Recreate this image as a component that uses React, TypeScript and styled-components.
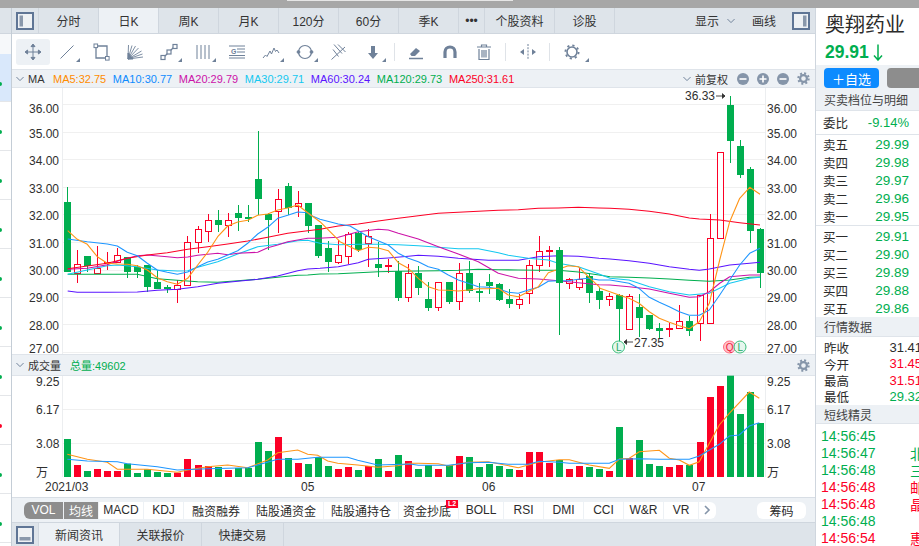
import React from "react";
import styled, { createGlobalStyle } from "styled-components";

const RED = "#fc0026";
const GREEN = "#00ae4f";
const ICON = "#6f8199";
const BAR = "#edf1f5";
const TAB = "#dee4ea";
const LINE = "#cfd6de";

const Global = createGlobalStyle`
  html, body { margin: 0; padding: 0; background: #fff; overflow: hidden; }
  body { font-family: "Liberation Sans", "Noto Sans CJK SC", sans-serif; color: #2b2b2b; }
  * { box-sizing: border-box; }
`;

const Page = styled.div`
  width: 919px; height: 546px; display: flex; flex-direction: column; overflow: hidden;
`;
const TitleBar = styled.div`
  height: 8px; flex: none; background: #a7a7a7; padding-left: 287px;
`;
const TitleSliver = styled.div`
  width: 226px; height: 1px; background: #e6e6e6;
`;
const Body = styled.div`
  flex: 1; display: flex; min-height: 0;
`;
const LeftStrip = styled.div`
  width: 12px; flex: none; display: flex; flex-direction: column; overflow: hidden;
  border-right: 1px solid #c4cdd6;
`;
const StripHead = styled.div`
  height: 26px; flex: none; background: ${TAB}; border-bottom: 1px solid ${LINE};
`;
const StripSub = styled.div`
  height: 20px; flex: none; background: #f6f8fa;
`;
const StripRow = styled.div<{ $active?: boolean; $h: number }>`
  position: relative; flex: none; height: ${p => p.$h}px;
  background: ${p => (p.$active ? "#d9e8fb" : "#fff")};
  border-bottom: 1px solid #e4e6e9;
`;
const StripDot = styled.span<{ $c: string }>`
  position: absolute; left: -2px; top: 28px; width: 4px; height: 4px; border-radius: 50%;
  background: ${p => p.$c};
`;
const Main = styled.div`
  width: 804px; flex: none; display: flex; flex-direction: column; border-right: 1px solid ${LINE};
`;
const TabRow = styled.div`
  height: 26px; flex: none; display: flex; align-items: stretch; background: ${TAB};
  border-bottom: 1px solid ${LINE}; font-size: 12px; color: #333;
`;
const Tab = styled.div<{ $w: number; $active?: boolean }>`
  width: ${p => p.$w}px; flex: none; display: flex; align-items: center; justify-content: center;
  border-right: 1px solid ${LINE}; background: ${p => (p.$active ? BAR : "transparent")};
`;
const RightTabs = styled.div`
  margin-left: auto; display: flex; align-items: center; padding-right: 5px;
`;
const PlainLabel = styled.span<{ $w: number }>`
  width: ${p => p.$w}px; display: flex; align-items: center; gap: 8px;
`;
const Toolbar = styled.div`
  height: 35px; flex: none; display: flex; align-items: center; padding-left: 4px; background: #fff;
`;
const Tool = styled.div<{ $active?: boolean; $w?: number }>`
  position: relative; width: ${p => p.$w ?? 34}px; height: 26px; flex: none;
  display: flex; align-items: center; justify-content: center; border-radius: 3px;
  background: ${p => (p.$active ? BAR : "transparent")};
`;
const Corner = styled.span`
  position: absolute; right: 4px; bottom: 3px; width: 0; height: 0;
  border-style: solid; border-width: 0 0 4px 4px; border-color: transparent transparent ${ICON} transparent;
`;
const ToolSep = styled.div`
  width: 1px; height: 18px; flex: none; background: #dfe3e8;
`;
const InfoBar = styled.div<{ $h: number }>`
  height: ${p => p.$h}px; flex: none; display: flex; align-items: center; gap: 6.67px;
  background: ${BAR}; border-top: 1px solid #dfe4ea; border-bottom: 1px solid #dfe4ea;
  padding-left: 4px; padding-right: 5px; font-size: 11px;
`;
const BarTitle = styled.span<{ $w: number }>`
  width: ${p => p.$w}px; margin-left: -2.67px; font-size: 11px; color: #333; flex: none; white-space: nowrap;
`;
const Legend = styled.span<{ $c: string }>`
  color: ${p => p.$c}; flex: none; font-size: 11px; white-space: nowrap;
`;
const BarTools = styled.div`
  margin-left: auto; display: flex; align-items: center; gap: 8px; color: #333;
`;
const BarLabel = styled.span`
  display: flex; align-items: center; gap: 4px; margin-right: 1px;
`;
const Canvas = styled.svg`
  display: block; flex: none; background: #fff; overflow: visible;
`;
const AxisText = styled.text`
  font-size: 12px; fill: #2f2f2f; font-family: "Liberation Sans", "Noto Sans CJK SC", sans-serif;
`;
const MarkText = styled.text<{ $c: string }>`
  font-size: 10px; fill: ${p => p.$c}; font-family: "Liberation Sans", sans-serif;
`;
const IndicatorBar = styled.div`
  height: 25px; flex: none; display: flex; align-items: center; gap: 1px;
  background: ${BAR}; border-top: 1px solid #d8dee5; padding: 0 9px 0 12px; font-size: 12px;
`;
const Chip = styled.div<{ $w: number; $on?: boolean; $radius?: string }>`
  position: relative; width: ${p => p.$w}px; height: 17px; flex: none;
  display: flex; align-items: center; justify-content: center;
  background: ${p => (p.$on ? "#8d8d8d" : "#fff")}; color: ${p => (p.$on ? "#fff" : "#2b2b2b")};
  border-radius: ${p => p.$radius ?? "0"};
`;
const ChipEnd = styled(Chip)`
  margin-left: auto;
`;
const ChipBadge = styled.span`
  position: absolute; right: 0; top: -2px; width: 12px; height: 8px; background: ${RED}; color: #fff;
  font-size: 7px; font-weight: 700; line-height: 8px; text-align: center;
`;
const ChipLabel = styled.span`
  font-size: 12px; white-space: nowrap; margin-left: -3px;
`;
const BottomTabs = styled.div`
  flex: 1; display: flex; align-items: stretch; background: ${TAB}; border-top: 1px solid ${LINE};
  font-size: 12px; color: #333;
`;
const Side = styled.div`
  flex: 1; min-width: 0; display: flex; flex-direction: column; overflow: hidden; background: #fff;
`;
const Name = styled.div`
  font-size: 20px; line-height: 24px; padding: 5px 0 0 9px; color: #2b2b2b; white-space: nowrap;
  height: 32px; flex: none;
`;
const Price = styled.div`
  height: 25px; flex: none; display: flex; align-items: center; gap: 4px; padding-left: 9px;
  font-size: 17.5px; font-weight: 700; color: ${GREEN};
`;
const ActionBar = styled.div`
  height: 23px; flex: none; display: flex; gap: 8px; padding: 3px 0 0 8px; background: ${BAR};
`;
const PrimaryBtn = styled.div`
  width: 55px; height: 20px; flex: none; border-radius: 4px; background: #0d8bff; color: #fff;
  font-size: 13px; display: flex; align-items: center; justify-content: center;
`;
const GrayBtn = styled.div`
  width: 50px; height: 20px; flex: none; border-radius: 4px; background: #8d8d8d;
`;
const SectionHead = styled.div<{ $h: number }>`
  height: ${p => p.$h}px; flex: none; display: flex; align-items: center; padding-left: 8px;
  background: ${BAR}; border-bottom: 1px solid #dfe4ea; font-size: 12px; color: #444;
`;
const Group = styled.div<{ $line?: boolean; $pad?: string }>`
  flex: none; padding: ${p => p.$pad ?? "0"}; border-bottom: ${p => (p.$line ? "1px solid #dfe4ea" : "none")};
`;
const QuoteRow = styled.div<{ $h: number }>`
  height: ${p => p.$h}px; display: flex; align-items: center; justify-content: space-between;
  padding: 0 10px 0 7px; font-size: 12.5px; white-space: nowrap;
`;
const StatRow = styled(QuoteRow)`
  padding: 0 0 0 8px; margin-right: -3px;
`;
const Val = styled.span<{ $c: string; $size?: number }>`
  color: ${p => p.$c}; font-size: ${p => p.$size ?? 13.5}px;
`;
const FlowRow = styled.div<{ $c: string }>`
  height: 17px; flex: none; display: flex; justify-content: space-between; align-items: center;
  padding-left: 5px; color: ${p => p.$c}; font-size: 14px; white-space: nowrap; width: 108px;
`;

type C = [number, number, number, number, number];
// [top wick, body top, body bottom, low wick, red?]  measured in 3x units from y=90
const candles: C[] = [
  [292,336,546,546,0],[480,523,548,578,1],[497,497,527,545,0],[468,535,548,548,1],[487,515,522,540,1],
  [475,496,515,520,1],[500,502,546,563,0],[525,530,546,563,0],[525,525,590,605,0],[540,576,597,597,0],
  [585,591,598,610,0],[570,586,597,640,1],[437,455,584,587,1],[408,418,455,488,1],[373,391,422,455,1],
  [360,390,405,425,0],[370,391,404,440,1],[345,369,384,422,0],[345,381,384,395,0],[124,267,326,375,0],
  [370,373,390,480,0],[297,328,364,430,1],[280,288,353,375,0],[303,340,347,382,1],[340,340,408,428,0],
  [405,405,498,505,0],[452,474,516,545,0],[450,496,515,522,1],[425,431,497,522,1],[425,429,480,485,0],
  [418,438,458,532,1],[455,522,534,562,0],[508,525,530,548,1],[512,544,623,632,0],[522,550,622,635,1],
  [528,549,593,615,0],[575,627,653,662,0],[575,577,652,663,1],[575,576,635,642,0],[520,550,634,660,1],
  [512,549,604,608,0],[580,603,607,635,0],[553,576,587,612,0],[578,582,630,632,0],[598,627,641,655,0],
  [612,628,643,656,1],[510,526,610,643,1],[438,482,526,545,1],[468,481,485,530,1],[472,480,578,736,0],
  [565,566,580,596,1],[535,566,592,600,1],[550,558,608,640,0],[590,604,630,656,0],[608,617,628,647,1],
  [612,616,656,760,0],[612,617,718,718,1],[612,652,684,740,0],[675,676,717,720,0],[698,714,722,745,0],
  [700,715,721,740,1],[645,694,715,717,1],[678,693,724,737,0],[615,615,700,752,1],[372,445,700,700,1],
  [187,187,445,445,1],[17,45,152,220,0],[150,168,255,263,0],[232,237,422,460,0],[415,418,548,595,0],
];

type Seg = [number, number[]];
const pts = (base: number, segs: Seg[]) => {
  const out: string[] = [];
  let last = -1;
  segs.forEach(([off, a]) => {
    for (let i = 0; i < a.length; i += 2) {
      const x = off + a[i] / 3;
      if (x > last) {
        out.push(`${x.toFixed(1)},${(base + a[i + 1] / 3).toFixed(1)}`);
        last = x;
      }
    }
  });
  return out.join(" ");
};

const maLines: { c: string; s: Seg[] }[] = [
  { c: "#00ae4f", s: [[0,[203,553,322,553,412,553,472,566,532,571,593,575,653,577,713,572,773,568,833,562,893,556,923,555]],[300,[60,552,115,551,175,548,235,545,295,544,355,543,415,542,475,541,535,538,595,539,655,540,715,541,775,541,835,546,897,555]],[590,[60,560,117,562,178,564,238,567,298,571,358,574,419,570,479,562,510,561]]] },
  { c: "#5a14ff", s: [[0,[203,603,232,607,322,607,412,606,472,601,532,598,593,590,653,580,713,574,773,568,833,558,893,542,923,537]],[300,[60,535,115,530,175,518,205,508,265,504,325,499,355,496,415,499,475,505,565,511,655,511,715,500,775,497,835,499,897,505]],[590,[60,507,117,512,178,520,238,530,298,538,328,541,358,537,419,525,479,520,510,517]]] },
  { c: "#14c8f0", s: [[0,[203,553,262,540,322,527,352,525,412,530,472,540,532,543,563,542,593,532,653,515,713,492,773,470,833,463,893,452,923,451]],[300,[60,460,115,464,175,463,235,463,295,464,355,467,415,472,475,476,535,476,595,488,625,496,685,505,745,510,775,520,835,530,897,552]],[590,[60,565,117,570,178,590,238,605,298,615,358,610,419,580,479,565,510,562]]] },
  { c: "#cc12a8", s: [[0,[203,538,262,535,322,524,352,514,382,505,412,497,442,495,502,500,532,503,563,501,593,496,653,490,683,494,713,490,773,487,803,473,833,465,863,455,893,450,923,445]],[300,[55,445,115,442,175,425,235,418,265,420,295,430,355,447,415,470,475,492,535,515,595,550,655,565,715,567,775,572,835,578,897,584]],[590,[60,585,117,590,178,597,238,610,298,622,328,620,358,605,389,580,419,560,479,555,510,555]]] },
  { c: RED, s: [[0,[203,536,262,528,322,520,382,505,442,495,502,488,563,478,623,470,683,462,743,453,803,442,863,430,923,422]],[300,[60,418,115,408,175,402,235,393,295,385,355,377,415,370,475,367,535,364,595,361,655,359,715,355,775,354,835,352,897,354]],[590,[60,355,117,358,178,364,238,372,298,384,328,387,389,390,449,398,510,405]]] },
  { c: "#1e96ff", s: [[0,[203,447,262,455,322,462,352,468,382,487,412,497,442,520,472,540,502,547,532,553,563,546,593,530,623,516,653,508,683,495,713,482,743,460,773,432,803,412,833,385,863,376,893,366,923,368]],[300,[30,375,60,388,115,402,150,408,205,440,265,465,295,490,325,505,355,515,385,530,415,538,445,555,475,570,505,580,535,590,565,592,595,596,625,607,655,610,685,600,715,592,745,574,775,572,805,572,835,568,865,565,897,570]],[590,[60,570,117,580,147,595,178,622,208,637,238,650,268,665,298,676,328,676,358,660,389,615,419,570,449,525,479,490,510,475]]] },
  { c: "#ff9416", s: [[0,[203,422,232,448,262,463,292,500,322,520,352,522,382,523,412,527,442,540,472,563,502,575,532,583,563,565,593,525,623,487,653,440,683,408,713,396,743,391,773,376,803,372,833,360,863,354,893,345,923,368]],[300,[60,395,90,425,120,455,150,470,175,482,205,472,235,474,265,482,295,518,325,535,355,565,385,590,415,600,445,601,475,603,505,600,535,596,565,596,595,595,625,615,655,620,685,605,715,590,745,548,775,538,805,527,835,530,865,560,897,590]],[590,[30,595,87,615,117,625,147,640,178,665,208,685,238,697,268,707,298,716,328,695,358,640,389,510,419,395,449,325,479,292,510,313]]] },
];

const volTops: [number, number][] = [
  [252,0],[330,1],[348,0],[342,1],[348,1],[348,1],[326,0],[354,0],[343,0],[351,0],[354,0],[353,1],[312,1],[330,1],[333,1],
  [336,0],[345,1],[339,0],[339,0],[261,0],[288,0],[246,1],[309,0],[324,1],[327,0],[306,0],[333,0],[342,1],[336,1],[345,0],
  [333,1],[312,0],[348,1],[300,0],[318,1],[342,0],[330,0],[342,1],[330,0],[303,1],[306,0],[336,0],[327,0],[333,0],[342,0],
  [345,1],[291,1],[291,1],[324,1],[315,0],[342,1],[333,1],[336,0],[342,0],[348,1],[216,0],[309,1],[255,0],[327,0],[333,0],
  [336,1],[330,1],[330,0],[261,1],[126,1],[93,1],[62,0],[177,0],[111,0],[204,0],
];
const volOrange: Seg[] = [[0,[202,298,262,313,322,322,352,343,442,343,532,352,563,345,623,335,683,330,743,338,803,315,833,293,893,285,923,298,953,301,983,318,1013,325,1073,330,1133,337,1193,332,1230,325]],[400,[55,325,115,326,145,333,205,322,265,320,355,338,415,322,478,314,508,314,568,330,628,340,658,312,688,310,718,290,778,286,808,310,838,315,868,331,898,320,958,210,988,175,1048,111,1078,130]]];
const volBlue: Seg[] = [[0,[202,313,262,318,352,320,382,326,472,335,532,345,623,341,743,338,773,330,833,313,893,313,953,307,1043,307,1073,316,1133,330,1230,327]],[400,[55,331,145,331,205,323,265,322,325,328,385,328,418,319,478,322,508,325,628,325,658,313,718,311,778,313,868,313,898,303,958,268,988,243,1018,240,1048,213,1078,203]]];

const cx = (i: number) => Math.round(67 + 10.04 * i);
const zy = (z: number) => 90 + z / 3;
const ry = (z: number) => Math.round(zy(z));

const Candle = ({ d, i }: { d: C; i: number }) => {
  const [t, a, b, l, r] = d;
  const x = cx(i);
  const c = r ? RED : GREEN;
  const h = ry(b) - ry(a);
  return (
    <g>
      <line x1={x + 0.5} x2={x + 0.5} y1={ry(t)} y2={ry(l)} stroke={c} strokeWidth={1} />
      {r && h > 2 ? (
        <rect x={x - 2.5} y={ry(a) + 0.5} width={6} height={h} fill="#fff" stroke={c} strokeWidth={1} />
      ) : (
        <rect x={x - 3} y={ry(a)} width={7} height={Math.max(h, 2)} fill={c} />
      )}
    </g>
  );
};

const priceLabels: [string, number][] = [["36.00",113],["35.00",138],["34.00",165],["33.00",193],["32.00",220],["31.00",248],["30.00",275],["29.00",302],["28.00",330],["27.00",353]];
const grid = [104,132,159,187,214,242,270,297,324,352];

const KChart = () => (
  <Canvas width={803} height={266} viewBox="12 88 803 266">
    {grid.map(y => <line key={y} x1={62} x2={765} y1={y + 0.5} y2={y + 0.5} stroke="#f0f0f0" />)}
    <line x1={62.5} x2={62.5} y1={88} y2={354} stroke="#eceef0" />
    <line x1={765.5} x2={765.5} y1={88} y2={354} stroke="#eceef0" />
    {candles.map((d, i) => <Candle key={i} d={d} i={i} />)}
    {maLines.map(m => <polyline key={m.c} points={pts(90, m.s)} fill="none" stroke={m.c} strokeWidth={1.1} strokeLinejoin="round" />)}
    <Candle d={candles[49]} i={49} />
    {priceLabels.map(([t, y]) => (
      <g key={t}>
        <AxisText x={29} y={y}>{t}</AxisText>
        <AxisText x={767} y={y}>{t}</AxisText>
      </g>
    ))}
    <AxisText x={685} y={100}>36.33</AxisText>
    <path d="M716 96h9M722 93.5l3 2.5-3 2.5" fill="#333" stroke="#333" strokeWidth={0.9} />
    <path d="M633 342h-9M627 339.5l-3 2.5 3 2.5" fill="#333" stroke="#333" strokeWidth={0.9} />
    <AxisText x={634} y={347}>27.35</AxisText>
    <circle cx={618.5} cy={347} r={6} fill="#e6f7ee" stroke="#3cbf7c" />
    <MarkText $c="#1fa862" x={616} y={350.5}>L</MarkText>
    <circle cx={729.5} cy={347} r={6} fill="#ffc4ce" stroke="#ff6a80" />
    <MarkText $c="#ef1f3d" x={725.7} y={350.5}>Q</MarkText>
    <circle cx={740} cy={347} r={6} fill="#e6f7ee" stroke="#3cbf7c" />
    <MarkText $c="#1fa862" x={737.5} y={350.5}>L</MarkText>
  </Canvas>
);

const VolChart = () => (
  <Canvas width={803} height={121} viewBox="12 376 803 121">
    {[409, 443].map(y => <line key={y} x1={62} x2={765} y1={y + 0.5} y2={y + 0.5} stroke="#f0f0f0" />)}
    <line x1={62.5} x2={62.5} y1={376} y2={477} stroke="#eceef0" />
    <line x1={765.5} x2={765.5} y1={376} y2={477} stroke="#eceef0" />
    {volTops.map(([t, r], i) => (
      <rect key={i} x={cx(i) - 3} y={355 + t / 3} width={7} height={477 - (355 + t / 3)} fill={r ? RED : GREEN} />
    ))}
    <polyline points={pts(355, volOrange)} fill="none" stroke="#ff9416" strokeWidth={1.1} />
    <polyline points={pts(355, volBlue)} fill="none" stroke="#1e96ff" strokeWidth={1.1} />
    {[["9.25",385.5],["6.17",414],["3.08",448],["万",477]].map(([t, y]) => (
      <g key={t as string}>
        <AxisText x={36} y={y as number}>{t}</AxisText>
        <AxisText x={767} y={y as number}>{t}</AxisText>
      </g>
    ))}
    <AxisText x={45} y={491}>2021/03</AxisText>
    <AxisText x={301} y={491}>05</AxisText>
    <AxisText x={482} y={491}>06</AxisText>
    <AxisText x={692} y={491}>07</AxisText>
  </Canvas>
);

const Ico = ({ children, s = 18 }: { children: React.ReactNode; s?: number }) => (
  <svg width={s} height={s} viewBox="0 0 18 18" fill="none" stroke={ICON} strokeWidth={1}>{children}</svg>
);
const I = {
  move: <Ico><path d="M9 2v14M2 9h14" /><path d="M9 1l2 2.6H7zM9 17l-2-2.6h4zM1 9l2.6-2v4zM17 9l-2.6 2V7z" fill={ICON} /></Ico>,
  line: <Ico><path d="M2.5 15.5L15.5 2.5" /></Ico>,
  rect: <Ico><path d="M4 3h11v12H4z" strokeWidth={1.3} /><rect x={2} y={1} width={3.6} height={3.6} fill="#fff" /><rect x={13.5} y={13.5} width={3.6} height={3.6} fill="#fff" /></Ico>,
  fan: <Ico><path d="M2 16L2.5 2M2 16L6 2.5M2 16L9.5 3M2 16L12.5 5M2 16L15.5 8M2 16L16.5 11M2 16L17 14" strokeWidth={0.9} /><path d="M2 16V10L7 16z" fill={ICON} /></Ico>,
  link: <Ico><path d="M2.5 15.5L15.5 2.5" strokeWidth={1.2} /><rect x={1} y={12.5} width={4} height={4} fill="#fff" strokeWidth={1.2} /><rect x={7} y={7} width={4} height={4} fill="#fff" strokeWidth={1.2} /><rect x={13} y={1.5} width={4} height={4} fill="#fff" strokeWidth={1.2} /></Ico>,
  vlines: <Ico><path d="M3 2v14M7 2v14M11 2v14M15 2v14" /></Ico>,
  g: <Ico><path d="M1 3h16M1 15h16M1 12.5h16M9 6h8M9 9h8" /><text x={3} y={10.5} fontSize={7} fontWeight={700} fill={ICON} stroke="none" fontFamily="Liberation Sans">G</text></Ico>,
  wave: <Ico><path d="M1 15l2.5-3 1.5 1.5L8 8l1.5 3L12 5l1.5 3.5L15 7l2 3" /></Ico>,
  circle: <Ico><circle cx={9} cy={9} r={6.5} strokeWidth={1.2} /><circle cx={2.5} cy={9} r={1.4} fill={ICON} /><circle cx={15.5} cy={9} r={1.4} fill={ICON} /></Ico>,
  fork: <Ico><path d="M1.5 16.5L15 4M4 1.5L12 10.5M8 1.5L15.5 9M3 6.5L8.5 13.5" /></Ico>,
  arrow: <Ico><path d="M9 16l-5-6h3V3h4v7h3z" fill={ICON} stroke="none" /></Ico>,
  eraser: <Ico><path d="M3 11l6-6 4 3-5 5H4.5z" fill={ICON} stroke="none" /><path d="M2 15.5h14" strokeWidth={1.5} /></Ico>,
  magnet: <Ico><path d="M4 15V9a5 5 0 0 1 10 0v6" strokeWidth={3.2} /></Ico>,
  trash: <Ico><g strokeWidth={1.2}><path d="M2 4h14M6.5 4V2h5v2" /><path d="M4 6v10.5h10V6M7 7v7.5M9 7v7.5M11 7v7.5" /></g></Ico>,
  split: <Ico><path d="M9 1v16" strokeDasharray="2 1.2" /><path d="M1 9l4-3v6zM17 9l-4 3V6z" fill={ICON} stroke="none" /></Ico>,
  gear: <Ico><circle cx={9} cy={9} r={5} strokeWidth={1.6} /><circle cx={9} cy={9} r={6.6} strokeWidth={1.8} strokeDasharray="2.2 3" /></Ico>,
};

const Toggle = ({ side }: { side: "left" | "right" | "bottom" }) => (
  <svg width={18} height={18} viewBox="0 0 18 18">
    <rect x={1} y={1} width={16} height={16} fill="#eef1f4" stroke="#5f7595" strokeWidth={2} />
    {side === "left" && <rect x={3.5} y={3.5} width={3.5} height={11} fill="#8a98ab" />}
    {side === "right" && <rect x={11} y={3.5} width={3.5} height={11} fill="#8a98ab" />}
    {side === "bottom" && <rect x={3.5} y={11} width={11} height={3.5} fill="#8a98ab" />}
  </svg>
);
const Chev = () => (
  <svg width={8} height={6} viewBox="0 0 9 6" fill="none" stroke={ICON} strokeWidth={1.1}><path d="M0.5 0.8L4.5 4.8L8.5 0.8" /></svg>
);
const Round = ({ plus }: { plus?: boolean }) => (
  <svg width={12} height={12} viewBox="0 0 12 12">
    <circle cx={6} cy={6} r={6} fill="#8595a9" />
    <path d={plus ? "M2.5 6h7M6 2.5v7" : "M2.5 6h7"} stroke="#fff" strokeWidth={1.6} />
  </svg>
);
const SmallGear = () => (
  <svg width={13} height={13} viewBox="0 0 13 13" fill="none" stroke="#8595a9">
    <circle cx={6.5} cy={6.5} r={3.4} strokeWidth={2.2} />
    <circle cx={6.5} cy={6.5} r={5.2} strokeWidth={2} strokeDasharray="2 2.08" />
  </svg>
);

const legends: [string, string][] = [
  ["MA5:32.75", "#ff8c00"], ["MA10:30.77", "#0d8bff"], ["MA20:29.79", "#cc12a8"], ["MA30:29.71", "#14c8f0"],
  ["MA60:30.24", "#5a14ff"], ["MA120:29.73", "#00ae4f"], ["MA250:31.61", RED],
];
const tabs: [string, number, boolean?][] = [
  ["分时", 60], ["日K", 60, true], ["周K", 60], ["月K", 60], ["120分", 60], ["60分", 60], ["季K", 60], ["•••", 26], ["个股资料", 70], ["诊股", 60],
];
const tools: [React.ReactNode, boolean][] = [
  [I.line, true], [I.rect, false], [I.fan, false], [I.link, true], [I.vlines, true], [I.g, false], [I.wave, true], [I.circle, true], [I.fork, false], [I.arrow, true],
];
const chips: [string, number][] = [
  ["MACD",44],["KDJ",39],["融资融券",64],["陆股通资金",74],["陆股通持仓",74],
];
const chips2: [string, number][] = [["BOLL",44],["RSI",39],["DMI",39],["CCI",39],["W&R",39],["VR",34]];

const sell: [string, string][] = [["卖五","29.99"],["卖四","29.98"],["卖三","29.97"],["卖二","29.96"],["卖一","29.95"]];
const buy: [string, string][] = [["买一","29.91"],["买二","29.90"],["买三","29.89"],["买四","29.88"],["买五","29.86"]];
const stats: [string, string, string][] = [["昨收","31.41","#2b2b2b"],["今开","31.45",RED],["最高","31.51",RED],["最低","29.32",GREEN]];
const flows: [string, string, string][] = [
  ["14:56:45","",GREEN],["14:56:47","北",GREEN],["14:56:48","三",GREEN],["14:56:48","邮",RED],["14:56:48","晶",RED],["14:56:48","",GREEN],["14:56:54","惠",RED],
];
const stripDots = [GREEN, GREEN, GREEN, GREEN, GREEN, GREEN, GREEN, RED, GREEN, GREEN];

export default function App() {
  return (
    <Page>
      <Global />
      <TitleBar><TitleSliver /></TitleBar>
      <Body>
        <LeftStrip>
          <StripHead />
          <StripSub />
          {stripDots.map((c, i) => (
            <StripRow key={i} $active={i === 0} $h={i === 0 ? 48 : 49}><StripDot $c={c} /></StripRow>
          ))}
        </LeftStrip>
        <Main>
          <TabRow>
            <Tab $w={27}><Toggle side="left" /></Tab>
            {tabs.map(([t, w, a]) => <Tab key={t} $w={w} $active={a}>{t}</Tab>)}
            <RightTabs>
              <PlainLabel $w={57}>显示 <Chev /></PlainLabel>
              <PlainLabel $w={40}>画线</PlainLabel>
              <Toggle side="right" />
            </RightTabs>
          </TabRow>
          <Toolbar>
            <Tool $active>{I.move}</Tool>
            {tools.map(([ic, corner], i) => <Tool key={i}>{ic}{corner && <Corner />}</Tool>)}
            <Tool $w={4} />
            <ToolSep />
            <Tool $w={4} />
            <Tool>{I.eraser}</Tool>
            <Tool>{I.magnet}</Tool>
            <Tool $w={33}>{I.trash}</Tool>
            <Tool $w={5} />
            <ToolSep />
            <Tool $w={43}>{I.split}</Tool>
            <ToolSep />
            <Tool $w={43}>{I.gear}<Corner /></Tool>
          </Toolbar>
          <InfoBar $h={19}>
            <Chev />
            <BarTitle $w={18.33}>MA</BarTitle>
            {legends.map(([t, c]) => <Legend key={t} $c={c}>{t}</Legend>)}
            <BarTools>
              <BarLabel><Chev />前复权</BarLabel>
              <Round />
              <Round plus />
              <Round />
              <SmallGear />
            </BarTools>
          </InfoBar>
          <KChart />
          <InfoBar $h={22}>
            <Chev />
            <BarTitle $w={35.33}>成交量</BarTitle>
            <Legend $c={GREEN}>总量:49602</Legend>
            <BarTools><SmallGear /></BarTools>
          </InfoBar>
          <VolChart />
          <IndicatorBar>
            <Chip $w={39} $on $radius="6px 0 0 6px">VOL</Chip>
            <Chip $w={34} $on>均线</Chip>
            {chips.map(([t, w]) => <Chip key={t} $w={w}>{t}</Chip>)}
            <Chip $w={59}><ChipLabel>资金抄底</ChipLabel><ChipBadge>L2</ChipBadge></Chip>
            {chips2.map(([t, w]) => <Chip key={t} $w={w}>{t}</Chip>)}
            <Chip $w={17} $radius="0 6px 6px 0">
              <svg width={7} height={10} viewBox="0 0 7 10" fill="none" stroke="#8595a9" strokeWidth={1.6}><path d="M1 1l4 4-4 4" /></svg>
            </Chip>
            <ChipEnd $w={49} $radius="6px">筹码</ChipEnd>
          </IndicatorBar>
          <BottomTabs>
            <Tab $w={27}><Toggle side="bottom" /></Tab>
            <Tab $w={81} $active>新闻资讯</Tab>
            <Tab $w={82}>关联报价</Tab>
            <Tab $w={82}>快捷交易</Tab>
          </BottomTabs>
        </Main>
        <Side>
          <Name>奥翔药业</Name>
          <Price>
            29.91
            <svg width={10} height={17} viewBox="0 0 10 17" fill="none" stroke={GREEN} strokeWidth={1.5}><path d="M5 0.5V16M1 11.5L5 16L9 11.5" /></svg>
          </Price>
          <ActionBar><PrimaryBtn>＋自选</PrimaryBtn><GrayBtn /></ActionBar>
          <SectionHead $h={23}>买卖档位与明细</SectionHead>
          <Group $line>
            <QuoteRow $h={22.5}><span>委比</span><Val $c={GREEN} $size={13}>-9.14%</Val></QuoteRow>
          </Group>
          <Group $line $pad="1px 0 0">
            {sell.map(([a, b]) => <QuoteRow key={a} $h={17.9}><span>{a}</span><Val $c={GREEN}>{b}</Val></QuoteRow>)}
          </Group>
          <Group $pad="2px 0 0">
            {buy.map(([a, b]) => <QuoteRow key={a} $h={17.9}><span>{a}</span><Val $c={GREEN}>{b}</Val></QuoteRow>)}
          </Group>
          <SectionHead $h={20}>行情数据</SectionHead>
          <Group $pad="2px 0 0">
            {stats.map(([a, b, c]) => <StatRow key={a} $h={16.4}><span>{a}</span><Val $c={c} $size={13}>{b}</Val></StatRow>)}
          </Group>
          <SectionHead $h={19.5}>短线精灵</SectionHead>
          <Group $pad="3px 0 0">
            {flows.map(([t, n, c], i) => <FlowRow key={i} $c={c}><span>{t}</span><span>{n}</span></FlowRow>)}
          </Group>
        </Side>
      </Body>
    </Page>
  );
}
